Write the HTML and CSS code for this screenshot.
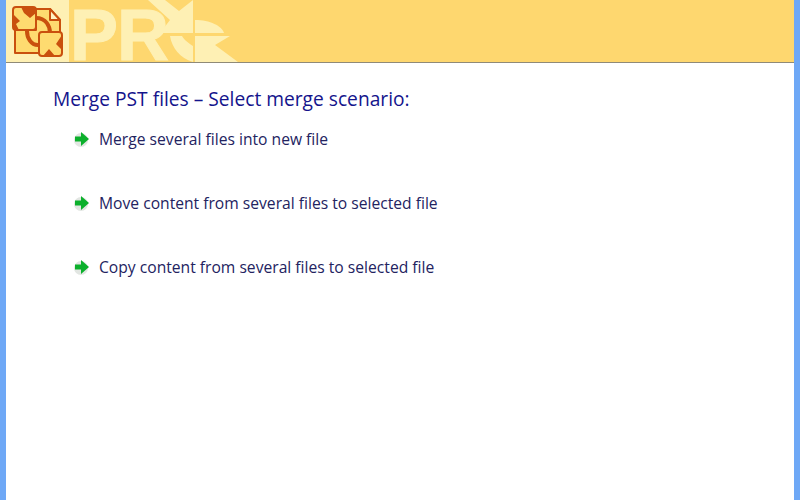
FILE: index.html
```html
<!DOCTYPE html>
<html>
<head>
    <title>Merge PST files</title>
    <link rel="stylesheet" href="styles.css">
</head>
<body>
    <div class="window">
        <div class="banner">
            <div class="logo-tile">
                <svg class="logo" width="52" height="52" viewBox="0 0 52 52">
                    <!-- back pages -->
                    <path d="M25 4 H39 L49 15 V31 H29 V48 H4 V25 H25 Z" fill="#fedb70" stroke="#c9500e" stroke-width="2" stroke-linejoin="round"/>
                    <path d="M39 4 V15 H49 Z" fill="#fff3c4" stroke="#c9500e" stroke-width="2" stroke-linejoin="round"/>
                    <!-- link between the pages -->
                    <path d="M25 13 C35 13 39 21 39 28 M27 40 C20 40 16 33 16 26" fill="none" stroke="#c9500e" stroke-width="4"/>
                    <!-- corner tiles -->
                    <rect x="2" y="2" width="23" height="23" rx="3" fill="#fedb70" stroke="#c9500e" stroke-width="2"/>
                    <path d="M10 2 H25 V8 L19 13 L13 8 Z M2 9 L9 16 L5 19 L8 25 H2 Z" fill="#c9500e"/>
                    <rect x="28" y="27" width="23" height="24" rx="3" fill="#fedb70" stroke="#c9500e" stroke-width="2"/>
                    <path d="M51 30 V45 L45 39 Z M32 51 L38 44 L44 51 Z" fill="#c9500e"/>
                </svg>
            </div>
            <div class="watermark">
                <span class="watermark-text">PR</span>
                <svg class="watermark-arrows" width="100" height="62" viewBox="0 0 100 62">
                    <path d="M0 0 H17 L31 11 L45 0 V33 H12 L22 20 Z" fill="#fef0b4"/>
                    <path d="M47 20 C62 20 74 26 76 33 H47 Z" fill="#fef0b4"/>
                    <path d="M47 36 H82 L67 45 L90 62 H47 Z" fill="#fef0b4"/>
                    <path d="M22 36 H34 C36 40 42 44 45 46 V62 C32 58 24 48 22 36 Z" fill="#fef0b4"/>
                </svg>
            </div>
        </div>
        <div class="content">
            <h1 class="title">Merge PST files – Select merge scenario:</h1>
            <ul class="scenarios">
                <li class="scenario">
                    <svg class="arrow" width="18" height="18" viewBox="0 0 18 18">
                        <circle cx="8" cy="10" r="7" fill="#e2e6e2"/>
                        <path d="M2 6.5 H8 V2 L16 9 L8 16 V11.5 H2 Z" fill="#0cb02c"/>
                    </svg>
                    Merge several files into new file
                </li>
                <li class="scenario">
                    <svg class="arrow" width="18" height="18" viewBox="0 0 18 18">
                        <circle cx="8" cy="10" r="7" fill="#e2e6e2"/>
                        <path d="M2 6.5 H8 V2 L16 9 L8 16 V11.5 H2 Z" fill="#0cb02c"/>
                    </svg>
                    Move content from several files to selected file
                </li>
                <li class="scenario">
                    <svg class="arrow" width="18" height="18" viewBox="0 0 18 18">
                        <circle cx="8" cy="10" r="7" fill="#e2e6e2"/>
                        <path d="M2 6.5 H8 V2 L16 9 L8 16 V11.5 H2 Z" fill="#0cb02c"/>
                    </svg>
                    Copy content from several files to selected file
                </li>
            </ul>
        </div>
    </div>
</body>
</html>
```
FILE: styles.css
```css
html, body {
    height: 100%;
}

body {
    margin: 0;
    overflow: hidden;
    background-color: #fff;
    font-family: "Open Sans", "Noto Sans", sans-serif;
}

.window {
    height: 100%;
    box-sizing: border-box;
    border-left: 6px solid #6ea8f6;
    border-right: 6px solid #6ea8f6;
}

.banner {
    display: flex;
    height: 63px;
    box-sizing: border-box;
    border-bottom: 1px solid #8f8a78;
    background-color: #fed76f;
}

.logo-tile {
    width: 63px;
    padding: 5px 0 0 5px;
    box-sizing: border-box;
    background-color: #fef0b4;
}

.logo {
    display: block;
}

.watermark {
    position: relative;
    flex: 1;
    overflow: hidden;
}

.watermark-text {
    display: block;
    margin-top: 11px;
    margin-left: 1px;
    font-family: "Liberation Sans", sans-serif;
    font-weight: bold;
    font-size: 72px;
    line-height: 48px;
    letter-spacing: -1px;
    color: #fef0b4;
    -webkit-text-stroke: 1px #fef0b4;
}

.watermark-arrows {
    position: absolute;
    left: 79px;
    top: 0;
}

.content {
    padding: 24px 0 0 47px;
}

.title {
    margin: 0;
    font-size: 19.2px;
    font-weight: normal;
    line-height: 24px;
    color: #14148c;
}

.scenarios {
    margin: 16px 0 0 20px;
    padding: 0;
    list-style: none;
}

.scenario {
    display: flex;
    align-items: center;
    gap: 8px;
    height: 24px;
    margin-bottom: 40px;
    font-size: 15.65px;
    color: #23235f;
}

.arrow {
    flex: none;
}
```
